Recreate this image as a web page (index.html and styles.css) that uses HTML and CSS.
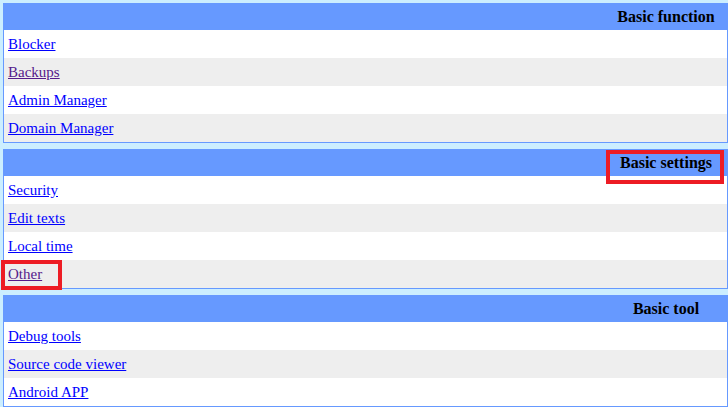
FILE: index.html
```html
<!DOCTYPE html>
<html>
<head>
<meta charset="utf-8">
<link rel="stylesheet" href="styles.css">
</head>
<body>
<div class="page">
  <section class="panel">
    <div class="panel-head"><span class="head-title">Basic function</span></div>
    <div class="row"><a href="#" class="link">Blocker</a></div>
    <div class="row alt"><a href="#" class="link visited">Backups</a></div>
    <div class="row"><a href="#" class="link">Admin Manager</a></div>
    <div class="row alt"><a href="#" class="link">Domain Manager</a></div>
  </section>
  <section class="panel">
    <div class="panel-head"><span class="head-title">Basic settings</span></div>
    <div class="row"><a href="#" class="link">Security</a></div>
    <div class="row alt"><a href="#" class="link">Edit texts</a></div>
    <div class="row"><a href="#" class="link">Local time</a></div>
    <div class="row alt"><a href="#" class="link visited">Other</a></div>
  </section>
  <section class="panel">
    <div class="panel-head"><span class="head-title">Basic tool</span></div>
    <div class="row"><a href="#" class="link">Debug tools</a></div>
    <div class="row alt"><a href="#" class="link">Source code viewer</a></div>
    <div class="row"><a href="#" class="link">Android APP</a></div>
  </section>
</div>
<div class="mark mark-settings"></div>
<div class="mark mark-other"></div>
</body>
</html>
```

FILE: styles.css
```css
html, body {
  margin: 0;
  padding: 0;
}
body {
  background: #cceeff;
  font-family: "Liberation Serif", "Times New Roman", serif;
  font-size: 15px;
  width: 728px;
  height: 407px;
  overflow: hidden;
  position: relative;
}
.page {
  padding: 3px 0 0 3px;
  display: flex;
  flex-direction: column;
  gap: 6px;
}
.panel {
  border: 1px solid #6699ff;
  border-top: 0;
  background: #ffffff;
}
.panel-head {
  background: #6699ff;
  height: 27px;
  display: flex;
  align-items: center;
  justify-content: flex-end;
  font-weight: bold;
  font-size: 16px;
  color: #000;
}
.head-title {
  width: 122px;
  text-align: center;
  white-space: nowrap;
}
.row {
  height: 28px;
  display: flex;
  align-items: center;
  padding-left: 4px;
  padding-top: 1px;
  box-sizing: border-box;
  background: #ffffff;
}
.row.alt {
  background: #eeeeee;
}
.link {
  color: #0000ff;
  text-decoration: underline;
}
.link.visited {
  color: #551a8b;
}
.mark {
  position: absolute;
  border: 4px solid #ed1c24;
  box-sizing: border-box;
}
.mark-settings {
  left: 606px;
  top: 150px;
  width: 118px;
  height: 34px;
}
.mark-other {
  left: 1px;
  top: 260px;
  width: 61px;
  height: 30px;
}
```
